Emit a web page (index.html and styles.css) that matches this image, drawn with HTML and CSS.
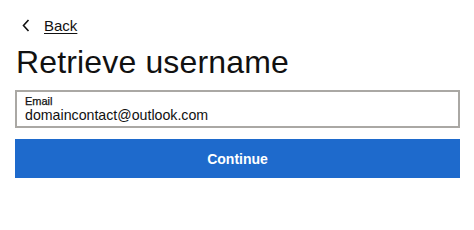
FILE: index.html
```html
<!DOCTYPE html>
<html>
<head>
<meta charset="utf-8">
<link rel="stylesheet" href="styles.css">
</head>
<body>
<div class="page">
  <a class="back" href="#">
    <svg class="chev" width="8" height="13" viewBox="0 0 8 13"><path d="M6.5 1 L1.5 6.5 L6.5 12" fill="none" stroke="#111" stroke-width="1.6"/></svg>
    <span class="back-text">Back</span>
  </a>
  <h1 class="title">Retrieve username</h1>
  <div class="field">
    <div class="label">Email</div>
    <div class="value">domaincontact@outlook.com</div>
  </div>
  <button class="btn">Continue</button>
</div>
</body>
</html>
```
FILE: styles.css
```css
html, body { margin: 0; padding: 0; background: #fff; }
body { font-family: "Liberation Sans", Arial, sans-serif; color: #111; }
.page { padding: 15px 14px 0 15px; display: flex; flex-direction: column; }
.back { display: flex; align-items: center; gap: 14px; color: #111; text-decoration: none; height: 20px; padding-left: 7px; }
.back-text { font-size: 15px; text-decoration: underline; text-underline-offset: 2px; }
.title { margin: 10px 0 0 1px; font-size: 32px; font-weight: 400; line-height: 34px; letter-spacing: 0.15px; }
.field { margin-top: 11px; border: 2px solid #aaa8a4; padding: 3px 8px 0; box-sizing: border-box; height: 38px; }
.label { font-size: 11px; line-height: 12px; color: #111; -webkit-text-stroke: 0.25px #111; }
.value { font-size: 14.2px; line-height: 17px; }
.btn { margin-top: 11px; height: 39px; background: #1e6acc; border: none; color: #fff; font-family: inherit; font-size: 14px; font-weight: 700; }
```
